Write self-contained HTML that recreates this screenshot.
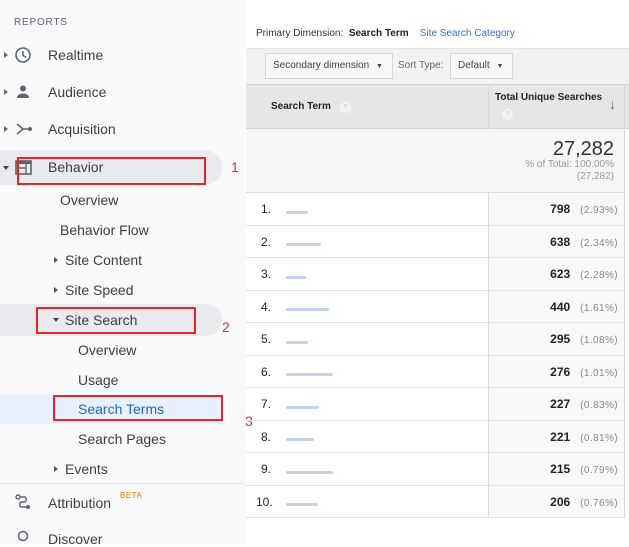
<!DOCTYPE html><html><head><style>
*{margin:0;padding:0;box-sizing:border-box}
body{width:629px;height:544px;overflow:hidden;font-family:"Liberation Sans",sans-serif;background:#fff;position:relative;color:#333}
.a{position:absolute;white-space:nowrap}
#side{position:absolute;left:0;top:0;width:245px;height:544px;background:#f8f9fa}
.nav{font-size:14px;color:#3c4043}
.sub{font-size:14px;color:#3c4043}
.tri{position:absolute;width:0;height:0;border-top:3px solid transparent;border-bottom:3px solid transparent;border-left:4px solid #666}
.trid{position:absolute;width:0;height:0;border-left:3.5px solid transparent;border-right:3.5px solid transparent;border-top:4px solid #444}
.red{position:absolute;border:2.5px solid #e8232a}
.num{position:absolute;color:#e03030;font-size:14px}
.row{position:absolute;left:246px;width:378px;height:33px;border-bottom:1px solid #e3e3e3;font-size:12px}
.blur{position:absolute;height:3px;background:#c5d3ea;border-radius:2px}
</style></head><body>
<div id="side">
<div class="a" style="left:14px;top:17px;font-size:10px;letter-spacing:.8px;color:#5f6368">REPORTS</div>
<div class="tri" style="left:4px;top:52px"></div>
<svg class="a" style="left:14px;top:46px" width="18" height="18" viewBox="0 0 18 18"><circle cx="9" cy="9" r="7" fill="none" stroke="#5f6368" stroke-width="1.6"/><path d="M9 5v4.5l3 1.8" fill="none" stroke="#5f6368" stroke-width="1.5"/></svg>
<div class="a nav" style="left:48px;top:47px">Realtime</div>
<div class="tri" style="left:4px;top:89px"></div>
<svg class="a" style="left:15px;top:84px" width="16" height="16" viewBox="0 0 16 16"><circle cx="8" cy="4.5" r="3" fill="#5f6368"/><path d="M2 14c0-3 3-4.5 6-4.5s6 1.5 6 4.5z" fill="#5f6368"/></svg>
<div class="a nav" style="left:48px;top:84px">Audience</div>
<div class="tri" style="left:4px;top:126px"></div>
<svg class="a" style="left:15px;top:121px" width="18" height="16" viewBox="0 0 18 16"><path d="M2 3l6 5-6 5M8 8h7" fill="none" stroke="#5f6368" stroke-width="1.6"/><circle cx="15" cy="8" r="2" fill="#5f6368"/></svg>
<div class="a nav" style="left:48px;top:121px">Acquisition</div>
<div class="a" style="left:0;top:150px;width:222px;height:35px;background:#e8eaed;border-radius:0 18px 18px 0"></div>
<div class="trid" style="left:3px;top:166px"></div>
<svg class="a" style="left:15px;top:160px" width="17" height="15" viewBox="0 0 17 15"><rect x="1" y="1" width="15" height="13" fill="none" stroke="#5f6368" stroke-width="1.6"/><rect x="1" y="1" width="15" height="3" fill="#5f6368"/><path d="M1 8h10M11 4v10" stroke="#5f6368" stroke-width="1.4"/></svg>
<div class="a nav" style="left:48px;top:159px">Behavior</div>
<div class="red" style="left:17px;top:157px;width:189px;height:28px"></div>
<div class="num" style="left:231px;top:159px">1</div>
<div class="a sub" style="left:60px;top:192px">Overview</div>
<div class="a sub" style="left:60px;top:222px">Behavior Flow</div>
<div class="tri" style="left:54px;top:257px;border-left-color:#555"></div>
<div class="a sub" style="left:65px;top:252px">Site Content</div>
<div class="tri" style="left:54px;top:287px;border-left-color:#555"></div>
<div class="a sub" style="left:65px;top:282px">Site Speed</div>
<div class="a" style="left:0;top:304px;width:222px;height:32px;background:#e8eaed;border-radius:0 16px 16px 0"></div>
<div class="trid" style="left:53px;top:318px"></div>
<div class="a sub" style="left:65px;top:312px">Site Search</div>
<div class="red" style="left:36px;top:307px;width:160px;height:27px"></div>
<div class="num" style="left:222px;top:319px">2</div>
<div class="a sub" style="left:78px;top:342px">Overview</div>
<div class="a sub" style="left:78px;top:372px">Usage</div>
<div class="a" style="left:0;top:395px;width:222px;height:29px;background:#e8f0fe"></div>
<div class="a sub" style="left:78px;top:401px;color:#1967d2">Search Terms</div>
<div class="red" style="left:53px;top:395px;width:170px;height:26px"></div>
<div class="a sub" style="left:78px;top:431px">Search Pages</div>
<div class="tri" style="left:54px;top:466px;border-left-color:#555"></div>
<div class="a sub" style="left:65px;top:461px">Events</div>
<div class="a" style="left:0;top:483px;width:245px;height:1px;background:#e3e3e3"></div>
<svg class="a" style="left:15px;top:494px" width="16" height="16" viewBox="0 0 16 16"><circle cx="3" cy="3" r="2" fill="none" stroke="#5f6368" stroke-width="1.4"/><circle cx="13" cy="13" r="2" fill="#5f6368"/><path d="M5 3h5a3 3 0 010 5H6a3 3 0 000 5h5" fill="none" stroke="#5f6368" stroke-width="1.4"/></svg>
<div class="a nav" style="left:48px;top:495px">Attribution</div>
<div class="a" style="left:120px;top:491px;font-size:8px;color:#e37400;letter-spacing:.5px">BETA</div>
<svg class="a" style="left:16px;top:530px" width="14" height="14" viewBox="0 0 14 14"><circle cx="7" cy="6" r="4.5" fill="none" stroke="#5f6368" stroke-width="1.5"/></svg>
<div class="a nav" style="left:48px;top:531px">Discover</div>
</div>
<div class="num" style="left:245px;top:413px">3</div>
<div class="a" style="left:256px;top:28px;font-size:10px;color:#333">Primary Dimension:&nbsp; <b style="color:#222">Search Term</b> &nbsp;&nbsp; <span style="color:#3a6fc9">Site Search Category</span></div>
<div class="a" style="left:246px;top:48px;width:383px;height:36px;background:#f2f2f2;border-top:1px solid #e5e5e5"></div>
<div class="a" style="left:265px;top:53px;width:128px;height:26px;background:#f7f7f7;border:1px solid #d5d5d5;font-size:10px;color:#444;line-height:24px;padding-left:7px">Secondary dimension <span style="font-size:7px;margin-left:4px">▼</span></div>
<div class="a" style="left:398px;top:60px;font-size:10px;color:#666;line-height:12px">Sort Type:</div>
<div class="a" style="left:450px;top:53px;width:63px;height:26px;background:#f7f7f7;border:1px solid #d5d5d5;font-size:10px;color:#444;line-height:24px;padding-left:7px">Default <span style="font-size:7px;margin-left:4px">▼</span></div>
<div class="a" style="left:246px;top:84px;width:383px;height:45px;background:#e6e6e6;border-top:1px solid #d0d0d0;border-bottom:1px solid #d0d0d0"></div>
<div class="a" style="left:271px;top:101px;font-size:10px;font-weight:bold;color:#222">Search Term <span style="display:inline-block;width:11px;height:11px;border-radius:50%;background:#f3f3f3;color:#ccc;font-size:7px;text-align:center;line-height:11px;margin-left:6px">?</span></div>
<div class="a" style="left:488px;top:84px;width:1px;height:434px;background:#d8d8d8"></div>
<div class="a" style="left:624px;top:84px;width:1px;height:434px;background:#d8d8d8"></div>
<div class="a" style="left:495px;top:92px;font-size:10px;font-weight:bold;color:#222">Total Unique Searches</div>
<div class="a" style="left:502px;top:109px;width:11px;height:11px;border-radius:50%;background:#f3f3f3;color:#ccc;font-size:7px;text-align:center;line-height:11px">?</div>
<div class="a" style="left:609px;top:97px;font-size:13px;color:#555">↓</div>
<div class="a" style="left:246px;top:129px;width:378px;height:64px;background:#f6f6f6;border-bottom:1px solid #dcdcdc"></div>
<div class="a" style="left:490px;top:138px;width:124px;text-align:right;font-size:20px;color:#333">27,282</div>
<div class="a" style="left:490px;top:159px;width:124px;text-align:right;font-size:10px;color:#999;line-height:12px">% of Total: 100.00%<br>(27,282)</div>
<div class="a" style="left:489px;top:193px;width:135px;height:325px;background:#f8f8f8"></div>
<div id="rows"></div>
<script>
var d=[["798","2.93",22],["638","2.34",35],["623","2.28",20],["440","1.61",43],["295","1.08",22],["276","1.01",47],["227","0.83",33],["221","0.81",28],["215","0.79",47],["206","0.76",32]];
var h="",tops=[193,226,258,291,323,356,388,421,453,486];
d.forEach(function(r,i){var t=tops[i],hh=(i<9?tops[i+1]:518)-t;
h+='<div class="row" style="top:'+t+'px;height:'+hh+'px"><span class="a" style="left:'+(i==9?10:15)+'px;top:0;line-height:'+hh+'px;font-size:12px;color:#222">'+(i+1)+'.</span><span class="blur" style="left:40px;width:'+r[2]+'px;top:'+(hh/2+1)+'px"></span><span class="a" style="left:250px;top:0;line-height:'+hh+'px;width:122px;text-align:right"><b style="font-size:12px;color:#222">'+r[0]+'</b><span style="font-size:10px;color:#888;letter-spacing:.4px;margin-left:10px">('+r[1]+'%)</span></span></div>';});
document.getElementById("rows").innerHTML=h;
</script>
</body></html>
